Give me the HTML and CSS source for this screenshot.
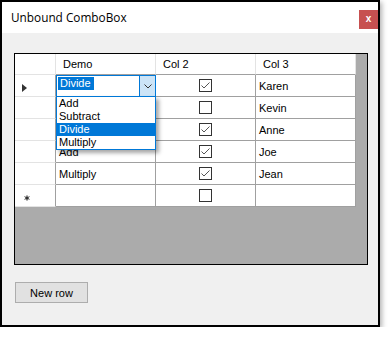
FILE: index.html
```html
<!DOCTYPE html>
<html>
<head>
<meta charset="utf-8">
<link rel="stylesheet" href="styles.css">
</head>
<body>
<div class="window">
  <div class="titlebar">
    <span class="title">Unbound ComboBox</span>
    <div class="close">x</div>
  </div>
  <div class="client">
    <div class="grid">
      <div class="row hdr">
        <div class="c rh hc"></div>
        <div class="c hc">Demo</div>
        <div class="c hc">Col 2</div>
        <div class="c hc">Col 3</div>
      </div>
      <div class="row">
        <div class="c rh"><span class="tri"></span></div>
        <div class="c editing">
          <span class="sel">Divide</span>
          <span class="arrow"><svg width="8" height="5" viewBox="0 0 8 5"><polyline points="0.5,0.5 4,4 7.5,0.5" fill="none" stroke="#333" stroke-width="1"/></svg></span>
        </div>
        <div class="c chk"><svg width="13" height="13" viewBox="0 0 13 13"><rect x="0.5" y="0.5" width="12" height="12" fill="#fff" stroke="#333"/><polyline points="2.5,6.5 5,9 10.5,3.5" fill="none" stroke="#555" stroke-width="1"/></svg></div>
        <div class="c">Karen</div>
      </div>
      <div class="row">
        <div class="c rh"></div>
        <div class="c"></div>
        <div class="c chk"><svg width="13" height="13" viewBox="0 0 13 13"><rect x="0.5" y="0.5" width="12" height="12" fill="#fff" stroke="#333"/></svg></div>
        <div class="c">Kevin</div>
      </div>
      <div class="row">
        <div class="c rh"></div>
        <div class="c"></div>
        <div class="c chk"><svg width="13" height="13" viewBox="0 0 13 13"><rect x="0.5" y="0.5" width="12" height="12" fill="#fff" stroke="#333"/><polyline points="2.5,6.5 5,9 10.5,3.5" fill="none" stroke="#555" stroke-width="1"/></svg></div>
        <div class="c">Anne</div>
      </div>
      <div class="row">
        <div class="c rh"></div>
        <div class="c">Add</div>
        <div class="c chk"><svg width="13" height="13" viewBox="0 0 13 13"><rect x="0.5" y="0.5" width="12" height="12" fill="#fff" stroke="#333"/><polyline points="2.5,6.5 5,9 10.5,3.5" fill="none" stroke="#555" stroke-width="1"/></svg></div>
        <div class="c">Joe</div>
      </div>
      <div class="row">
        <div class="c rh"></div>
        <div class="c">Multiply</div>
        <div class="c chk"><svg width="13" height="13" viewBox="0 0 13 13"><rect x="0.5" y="0.5" width="12" height="12" fill="#fff" stroke="#333"/><polyline points="2.5,6.5 5,9 10.5,3.5" fill="none" stroke="#555" stroke-width="1"/></svg></div>
        <div class="c">Jean</div>
      </div>
      <div class="row">
        <div class="c rh"><svg class="star" width="6" height="6" viewBox="0 0 6 6"><g stroke="#444" stroke-width="1"><line x1="3" y1="0.3" x2="3" y2="5.7"/><line x1="0.5" y1="1.6" x2="5.5" y2="4.4"/><line x1="0.5" y1="4.4" x2="5.5" y2="1.6"/></g><circle cx="3" cy="3" r="1.5" fill="#333"/></svg></div>
        <div class="c"></div>
        <div class="c chk"><svg width="13" height="13" viewBox="0 0 13 13"><rect x="0.5" y="0.5" width="12" height="12" fill="#fff" stroke="#333"/></svg></div>
        <div class="c"></div>
      </div>
      <div class="dropdown">
        <div class="item">Add</div>
        <div class="item">Subtract</div>
        <div class="item on">Divide</div>
        <div class="item">Multiply</div>
      </div>
    </div>
    <button class="btn">New row</button>
  </div>
</div>
</body>
</html>
```
FILE: styles.css
```css
body {
  margin: 0;
  background: #fff;
}
.window {
  width: 376px;
  height: 323px;
  border: 2px solid #000;
  background: #f0f0f0;
  box-shadow: 2px 2px 5px rgba(0, 0, 0, 0.3);
  display: flex;
  flex-direction: column;
}
.titlebar {
  height: 31px;
  background: #fff;
  display: flex;
  align-items: flex-start;
}
.title {
  font-family: "Open Sans", "Noto Sans", sans-serif;
  font-size: 11.8px;
  line-height: 31px;
  color: #000;
  margin-left: 9px;
}
.close {
  margin-left: auto;
  margin-top: 8px;
  width: 19px;
  height: 19px;
  background: #c75050;
  color: #fff;
  font-family: "Liberation Sans", Arial, sans-serif;
  font-weight: bold;
  font-size: 10px;
  line-height: 18px;
  text-align: center;
}
.client {
  flex: 1;
  padding: 20px 0 0 12px;
  font-family: "Liberation Sans", Arial, sans-serif;
  font-size: 11px;
  color: #000;
}
.grid {
  position: relative;
  width: 352px;
  height: 210px;
  border: 1px solid #000;
  background: #ababab;
}
.row {
  display: flex;
  height: 22px;
}
.row.hdr {
  height: 21px;
}
.c {
  box-sizing: border-box;
  width: 100px;
  background: #fff;
  border-right: 1px solid #a0a0a0;
  border-bottom: 1px solid #a0a0a0;
  padding: 1px 0 0 3px;
  display: flex;
  align-items: center;
  white-space: nowrap;
}
.c.rh {
  width: 41px;
  padding: 0;
  border-bottom-color: #e3e3e3;
  align-items: flex-start;
}
.c.hc {
  padding: 0 0 0 7px;
  border-right-color: #e3e3e3;
}
.c.chk {
  justify-content: center;
  padding: 0;
}
.tri {
  margin: 9px 0 0 7px;
  width: 0;
  height: 0;
  border-left: 5px solid #333;
  border-top: 4px solid transparent;
  border-bottom: 4px solid transparent;
}
.star {
  margin: 10px 0 0 9px;
}
.c.editing {
  border: 1px solid #0078d7;
  padding: 0;
  align-items: stretch;
}
.sel {
  align-self: flex-start;
  margin: 1px 0 0 1px;
  height: 13px;
  line-height: 13px;
  padding: 0 3px 0 2px;
  background: #0078d7;
  color: #fff;
}
.arrow {
  margin-left: auto;
  width: 15px;
  background: #cce4f7;
  border-left: 1px solid #0078d7;
  display: flex;
  align-items: center;
  justify-content: center;
}
.dropdown {
  position: absolute;
  left: 41px;
  top: 42px;
  width: 98px;
  border: 1px solid #0078d7;
  background: #fff;
  box-shadow: 3px 3px 4px rgba(0, 0, 0, 0.35);
}
.item {
  height: 13px;
  line-height: 13px;
  padding-left: 2px;
}
.item.on {
  background: #0078d7;
  color: #fff;
}
.btn {
  display: block;
  margin: 17px 0 0 1px;
  width: 73px;
  height: 21px;
  padding: 0;
  background: #e1e1e1;
  border: 1px solid #adadad;
  font-family: "Liberation Sans", Arial, sans-serif;
  font-size: 11px;
  color: #000;
}
```
